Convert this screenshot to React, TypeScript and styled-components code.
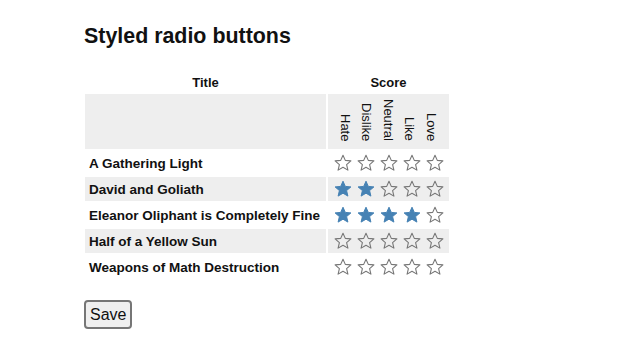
import React, { useState } from 'react';
import styled, { createGlobalStyle } from 'styled-components';

const GlobalStyle = createGlobalStyle`
  body {
    margin: 0;
    background: #fff;
    font-family: "Liberation Sans", Arial, sans-serif;
    color: #111;
  }
`;

const Page = styled.main`
  padding: 22px 0 0 84px;
`;

const Heading = styled.h1`
  margin: 0 0 20px 0;
  font-size: 21.4px;
  font-weight: bold;
  line-height: 28px;
`;

const Table = styled.table`
  border-collapse: separate;
  border-spacing: 2px;
  margin-left: -1px;
  font-size: 13.5px;
`;

const HeadCell = styled.th`
  font-weight: bold;
  font-size: 13px;
  height: 20px;
  padding: 0;
  text-align: center;
`;

const LabelRow = styled.tr`
  background: #eee;
`;

const LabelCell = styled.th<{ $wide?: boolean }>`
  padding: 0 3px 8px;
  height: 47px;
  width: ${({ $wide }) => ($wide ? '235px' : 'auto')};
  vertical-align: bottom;
`;

const Labels = styled.div`
  display: flex;
  align-items: flex-end;
  padding-left: 3px;
`;

const Label = styled.span`
  width: 21.5px;
  writing-mode: vertical-rl;
  font-weight: normal;
  font-size: 13px;
  line-height: 21.5px;
  text-align: end;
`;

const Row = styled.tr<{ $shade: boolean }>`
  background: ${({ $shade }) => ($shade ? '#eee' : '#fff')};
`;

const TitleCell = styled.td`
  padding: 0 2px 0 4px;
  height: 24px;
  font-weight: bold;
  white-space: nowrap;
`;

const ScoreCell = styled.td`
  padding: 0 3px;
`;

const Stars = styled.div`
  display: flex;
`;

const StarButton = styled.label`
  width: 23px;
  height: 22px;
  display: flex;
  align-items: center;
  justify-content: center;
  cursor: pointer;

  input {
    position: absolute;
    opacity: 0;
    width: 0;
    height: 0;
  }
`;

const SaveButton = styled.button`
  margin-top: 19px;
  font-family: "Liberation Sans", Arial, sans-serif;
  font-size: 16px;
  line-height: 19px;
  padding: 3px 4px;
  background: #efefef;
  border: 2px solid #767676;
  border-radius: 4px;
  color: #111;
`;

const STAR = 'M9 1.2 L11.3 6.4 L16.9 6.9 L12.6 10.6 L13.9 16.1 L9 13.2 L4.1 16.1 L5.4 10.6 L1.1 6.9 L6.7 6.4 Z';

function Star({ filled }: { filled: boolean }) {
  return (
    <svg width="18" height="18" viewBox="0 0 18 18">
      <path
        d={STAR}
        fill={filled ? '#4682b4' : 'none'}
        stroke={filled ? '#4682b4' : '#777'}
        strokeWidth={filled ? 1 : 1.1}
        strokeLinejoin="round"
      />
    </svg>
  );
}

const levels = ['Hate', 'Dislike', 'Neutral', 'Like', 'Love'];

const initial = [
  { title: 'A Gathering Light', score: 0 },
  { title: 'David and Goliath', score: 2 },
  { title: 'Eleanor Oliphant is Completely Fine', score: 4 },
  { title: 'Half of a Yellow Sun', score: 0 },
  { title: 'Weapons of Math Destruction', score: 0 },
];

export default function App() {
  const [books, setBooks] = useState(initial);

  const rate = (i: number, score: number) =>
    setBooks(prev => prev.map((b, j) => (j === i ? { ...b, score } : b)));

  return (
    <Page>
      <GlobalStyle />
      <Heading>Styled radio buttons</Heading>
      <Table>
        <thead>
          <tr>
            <HeadCell>Title</HeadCell>
            <HeadCell>Score</HeadCell>
          </tr>
          <LabelRow>
            <LabelCell $wide />
            <LabelCell>
              <Labels>
                {levels.map(l => (
                  <Label key={l}>{l}</Label>
                ))}
              </Labels>
            </LabelCell>
          </LabelRow>
        </thead>
        <tbody>
          {books.map((b, i) => (
            <Row key={b.title} $shade={i % 2 === 1}>
              <TitleCell>{b.title}</TitleCell>
              <ScoreCell>
                <Stars>
                  {levels.map((l, k) => (
                    <StarButton key={l} title={l}>
                      <input
                        type="radio"
                        name={`score-${i}`}
                        checked={b.score === k + 1}
                        onChange={() => rate(i, k + 1)}
                      />
                      <Star filled={k < b.score} />
                    </StarButton>
                  ))}
                </Stars>
              </ScoreCell>
            </Row>
          ))}
        </tbody>
      </Table>
      <SaveButton type="button">Save</SaveButton>
    </Page>
  );
}
